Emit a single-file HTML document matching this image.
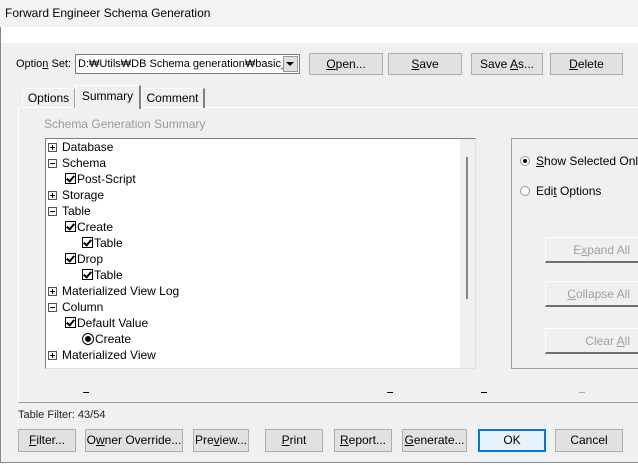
<!DOCTYPE html>
<html><head><style>
*{margin:0;padding:0;box-sizing:border-box}
body{width:638px;height:465px;overflow:hidden;background:#f0f0f0;font-family:"Liberation Sans",sans-serif;font-size:12px;color:#000;position:relative}
.a{position:absolute;white-space:nowrap}
.btn{position:absolute;background:#e1e1e1;border:1px solid #adadad;text-align:center;line-height:21px;font-size:12px}
.dis{position:absolute;background:#f0f0f0;border-bottom:2px solid #707070;border-top:1px solid #fff;border-left:1px solid #fff;color:#a0a0a0;text-align:right;padding-right:8px;line-height:24px;font-size:12px}
.row{position:absolute;height:16px;line-height:16px;font-size:12px}
.pm{display:inline-block;width:9px;height:9px;border:1px solid #555;position:relative;vertical-align:-1px;margin-right:5px;background:#fff}
.pm:before{content:"";position:absolute;left:1px;top:3px;width:5px;height:1px;background:#000}
.pm.p:after{content:"";position:absolute;left:3px;top:1px;width:1px;height:5px;background:#000}
.cb{display:inline-block;width:11px;height:11px;border:1px solid #000;vertical-align:-1px;margin-right:1px;position:relative;background:#fff}
.cb:after{content:"";position:absolute;left:2px;top:0px;width:3px;height:6px;border-right:2px solid #000;border-bottom:2px solid #000;transform:rotate(40deg)}
u{text-decoration:underline}
</style></head><body>
<div class="a" style="left:0;top:0;width:638px;height:27px;background:#f3f3f3"></div>
<div class="a" style="left:5px;top:6px;font-size:12px">Forward Engineer Schema Generation</div>
<div class="a" style="left:0;top:27px;width:638px;height:16px;background:#fff"></div>
<div class="a" style="left:0;top:27px;width:1px;height:436px;background:#888"></div>
<div class="a" style="left:16px;top:58px;font-size:11px">Optio<u>n</u> Set:</div>
<div class="a" style="left:75px;top:54px;width:225px;height:20px;background:#fff;border:1px solid #7a7a7a"></div>
<div class="a" style="left:78px;top:58px;width:205px;overflow:hidden;font-size:11px">D:₩Utils₩DB Schema generation₩basic_s</div>
<div class="a" style="left:283px;top:56px;width:15px;height:16px;background:#e1e1e1;border:1px solid #999"></div>
<div class="a" style="left:286px;top:62px;border-left:4px solid transparent;border-right:4px solid transparent;border-top:4px solid #000"></div>
<div class="btn" style="left:309px;top:53px;width:74px;height:22px"><u>O</u>pen...</div>
<div class="btn" style="left:388px;top:53px;width:74px;height:22px"><u>S</u>ave</div>
<div class="btn" style="left:471px;top:53px;width:72px;height:22px">Save <u>A</u>s...</div>
<div class="btn" style="left:550px;top:53px;width:73px;height:22px"><u>D</u>elete</div>
<div class="a" style="left:18px;top:107px;width:620px;height:296px;border-top:1px solid #fff;border-left:1px solid #fff;border-bottom:1px solid #a0a0a0"></div>
<div class="a" style="left:22px;top:88px;width:53px;height:20px;border:1px solid #fff;border-right:1px solid #a0a0a0;border-bottom:none;text-align:center;line-height:19px">Options</div>
<div class="a" style="left:75px;top:85px;width:66px;height:24px;background:#f0f0f0;border:1px solid #fff;border-right:2px solid #808080;border-bottom:none;text-align:center;line-height:20px">Summary</div>
<div class="a" style="left:141px;top:88px;width:64px;height:20px;border:1px solid #fff;border-right:2px solid #808080;border-bottom:none;text-align:center;line-height:19px">Comment</div>
<div class="a" style="left:44px;top:117px;color:#9a9a9a">Schema Generation Summary</div>
<div class="a" style="left:45px;top:138px;width:431px;height:231px;background:#fff;border-top:1px solid #808080;border-left:1px solid #808080;border-right:1px solid #e0e0e0;border-bottom:1px solid #e0e0e0;overflow:hidden">
<div class="a" style="left:414px;top:0;width:15px;height:229px;background:#f0f0f0"></div>
<div class="a" style="left:420px;top:18px;width:2px;height:142px;background:#858585"></div>
<div class="row" style="left:2px;top:0"><span class="pm p"></span>Database</div>
<div class="row" style="left:2px;top:16px"><span class="pm"></span>Schema</div>
<div class="row" style="left:19px;top:32px"><span class="cb"></span>Post-Script</div>
<div class="row" style="left:2px;top:48px"><span class="pm p"></span>Storage</div>
<div class="row" style="left:2px;top:64px"><span class="pm"></span>Table</div>
<div class="row" style="left:19px;top:80px"><span class="cb"></span>Create</div>
<div class="row" style="left:36px;top:96px"><span class="cb"></span>Table</div>
<div class="row" style="left:19px;top:112px"><span class="cb"></span>Drop</div>
<div class="row" style="left:36px;top:128px"><span class="cb"></span>Table</div>
<div class="row" style="left:2px;top:144px"><span class="pm p"></span>Materialized View Log</div>
<div class="row" style="left:2px;top:160px"><span class="pm"></span>Column</div>
<div class="row" style="left:19px;top:176px"><span class="cb"></span>Default Value</div>
<div class="row" style="left:36px;top:192px"><span style="display:inline-block;width:12px;height:12px;border:1px solid #000;border-radius:50%;vertical-align:-2px;position:relative;margin-right:1px"><span style="position:absolute;left:2px;top:2px;width:6px;height:6px;border-radius:50%;background:#000"></span></span>Create</div>
<div class="row" style="left:2px;top:208px"><span class="pm p"></span>Materialized View</div>
</div>
<div class="a" style="left:511px;top:138px;width:130px;height:231px;border:1px solid #a0a0a0"></div>
<div class="a" style="left:520px;top:156px;width:10px;height:10px;border:1px solid #999;border-radius:50%;background:#fff"><span style="position:absolute;left:2px;top:2px;width:4px;height:4px;background:#000;border-radius:50%"></span></div>
<div class="a" style="left:536px;top:154px"><u>S</u>how Selected Only</div>
<div class="a" style="left:520px;top:186px;width:10px;height:10px;border:1px solid #999;border-radius:50%;background:#fff"></div>
<div class="a" style="left:536px;top:184px">Edi<u>t</u> Options</div>
<div class="dis" style="left:545px;top:237px;width:93px;height:26px">E<u>x</u>pand All</div>
<div class="dis" style="left:545px;top:281px;width:93px;height:26px"><u>C</u>ollapse All</div>
<div class="dis" style="left:545px;top:328px;width:93px;height:26px">Clear <u>A</u>ll</div>
<div class="a" style="left:83px;top:392px;width:6px;height:1px;background:#000"></div>
<div class="a" style="left:387px;top:392px;width:6px;height:1px;background:#000"></div>
<div class="a" style="left:481px;top:392px;width:6px;height:1px;background:#000"></div>
<div class="a" style="left:579px;top:392px;width:6px;height:1px;background:#aaa"></div>
<div class="a" style="left:18px;top:409px;font-size:11px;color:#222">Table Filter: 43/54</div>
<div class="btn" style="left:18px;top:429px;width:58px;height:23px"><u>F</u>ilter...</div>
<div class="btn" style="left:85px;top:429px;width:98px;height:23px">O<u>w</u>ner Override...</div>
<div class="btn" style="left:193px;top:429px;width:56px;height:23px">Pre<u>v</u>iew...</div>
<div class="btn" style="left:265px;top:429px;width:58px;height:23px"><u>P</u>rint</div>
<div class="btn" style="left:334px;top:429px;width:58px;height:23px"><u>R</u>eport...</div>
<div class="btn" style="left:402px;top:429px;width:65px;height:23px"><u>G</u>enerate...</div>
<div class="btn" style="left:478px;top:429px;width:68px;height:23px;border:2px solid #0078d7;line-height:19px;background:#e5f1fb">OK</div>
<div class="btn" style="left:555px;top:429px;width:68px;height:23px">Cancel</div>
<div class="a" style="left:0;top:462px;width:638px;height:1px;background:#888"></div>
<div class="a" style="left:0;top:463px;width:638px;height:2px;background:#fff"></div>
</body></html>
